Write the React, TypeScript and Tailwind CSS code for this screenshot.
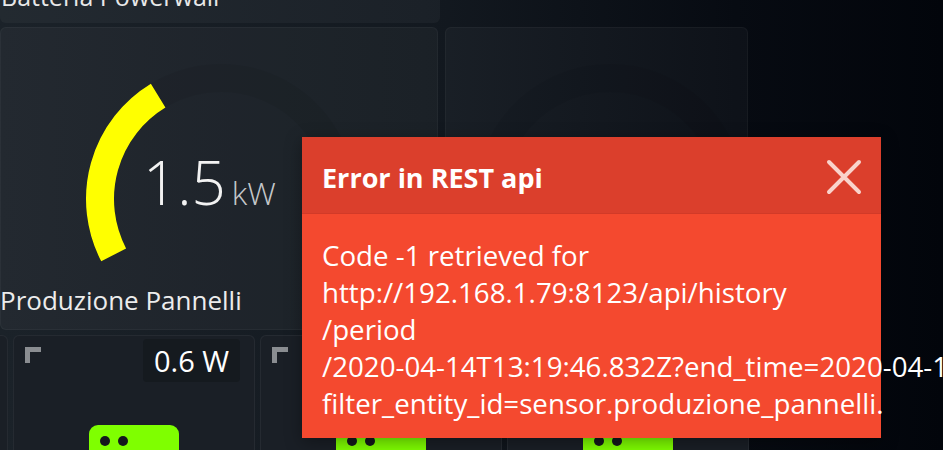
import React from 'react'

const font = { fontFamily: '"Open Sans", "Noto Sans", sans-serif' }

function polar(cx: number, cy: number, r: number, deg: number) {
  const a = (deg * Math.PI) / 180
  return [cx + r * Math.cos(a), cy + r * Math.sin(a)]
}

function arc(cx: number, cy: number, r: number, from: number, to: number) {
  const [x1, y1] = polar(cx, cy, r, from)
  const [x2, y2] = polar(cx, cy, r, to)
  const large = to - from > 180 ? 1 : 0
  return `M ${x1} ${y1} A ${r} ${r} 0 ${large} 1 ${x2} ${y2}`
}

function Gauge({ value }: { value?: number }) {
  return (
    <svg width="303" height="250" viewBox="0 0 303 250" className="block">
      <path d={arc(165, 171, 121, 152.5, 387.5)} fill="none" stroke="rgba(0,0,0,0.055)" strokeWidth="28" />
      {value !== undefined && (
        <path d={arc(165, 171, 121, 152.5, 238.7)} fill="none" stroke="#ffff00" strokeWidth="28" />
      )}
    </svg>
  )
}

function Tile({ label }: { label?: string }) {
  return (
    <div className="relative w-[242px] h-[120px] shrink-0 rounded-md bg-[#1a1f26] border border-white/[0.05]">
      <div className="absolute left-[11px] top-[11px] w-[16px] h-[16px] border-l-[5px] border-t-[5px] border-[#8a8d91]" />
      {label && (
        <div className="absolute left-[129px] top-[3px] w-[97px] h-[43px] bg-[#151a1f] rounded-sm flex items-center justify-center text-[29px] text-white">
          {label}
        </div>
      )}
      <div className="absolute left-[75px] top-[89px] w-[90px] h-[40px] rounded-t-[9px] bg-[#7fff00]">
        <div className="flex gap-[8px] ml-[11px] mt-[11px]">
          <span className="w-[10px] h-[10px] rounded-full bg-[#14181c]" />
          <span className="w-[10px] h-[10px] rounded-full bg-[#14181c]" />
        </div>
      </div>
    </div>
  )
}

export default function App() {
  return (
    <div
      className="relative w-[943px] h-[450px] overflow-hidden bg-[linear-gradient(90deg,#1b2229_0%,#131920_45%,#070b12_78%,#02050b_100%)]"
      style={font}
    >
      <div className="flex flex-col">
        {/* top card */}
        <div className="w-[440px] h-[23px] rounded-b-md bg-white/[0.035] overflow-hidden">
          <div className="-mt-[16px] text-[25px] leading-[24px] text-[#e8e8e8] pl-[1px]">Batteria Powerwall</div>
        </div>

        {/* gauges */}
        <div className="flex gap-[7px] mt-[4px]">
          <div className="relative w-[438px] h-[303px] rounded-md bg-white/[0.035] border border-white/[0.035] overflow-hidden">
            <div className="ml-[55px]">
              <Gauge value={1.5} />
            </div>
            <div className="absolute left-[142px] top-[124px] flex items-baseline text-[#f2f2f2]">
              <span className="text-[60px] font-light leading-none">1.5</span>
              <span className="ml-[6px] text-[32px] font-light text-[#c4c7ca]">kW</span>
            </div>
            <div className="mt-[6px] text-[26px] leading-[32px] text-[#ececec] -ml-[1px]">Produzione Pannelli</div>
          </div>
          <div className="w-[303px] h-[303px] rounded-md bg-white/[0.03] border border-white/[0.035] overflow-hidden">
            <div className="-ml-[1px]">
              <Gauge />
            </div>
          </div>
        </div>

        {/* tiles */}
        <div className="flex gap-[5px] mt-[5px] -ml-[234px]">
          <Tile />
          <Tile label="0.6 W" />
          <Tile />
          <Tile />
        </div>
      </div>

      {/* error dialog */}
      <div className="absolute left-[302px] top-[137px] w-[579px] h-[301px] bg-[#f4492f] shadow-[0_4px_16px_rgba(0,0,0,0.35)]">
        <div className="h-[77px] bg-[#db3f2c] flex items-center justify-between pl-[20px] pr-[19px] border-b border-[#d23a28]">
          <span className="text-[27px] font-bold text-white mt-[6px]">Error in REST api</span>
          <svg width="36" height="36" viewBox="0 0 36 36" className="mt-[4px]">
            <path d="M3 3 L33 33 M33 3 L3 33" stroke="#f9d3cb" strokeWidth="4" strokeLinecap="round" />
          </svg>
        </div>
        <div className="pl-[20px] pt-[23px] text-[27.7px] leading-[37px] text-white whitespace-nowrap">
          <div>Code -1 retrieved for</div>
          <div>http://192.168.1.79:8123/api/history</div>
          <div>/period</div>
          <div>/2020-04-14T13:19:46.832Z?end_time=2020-04-14T13:19:46.832Z&amp;</div>
          <div>filter_entity_id=sensor.produzione_pannelli.</div>
        </div>
      </div>
    </div>
  )
}
